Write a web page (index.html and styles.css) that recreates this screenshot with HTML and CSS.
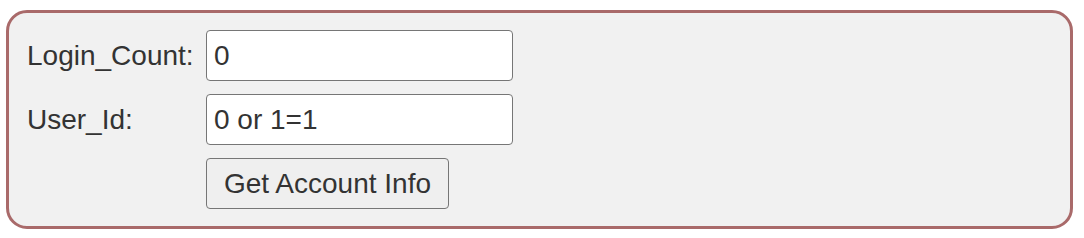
FILE: index.html
```html
<!DOCTYPE html>
<html lang="en">
<head>
    <meta charset="UTF-8">
    <title>Account Info</title>
    <link rel="stylesheet" href="styles.css">
</head>
<body>
    <form class="panel">
        <label for="login_count">Login_Count:</label>
        <input type="text" id="login_count" value="0">

        <label for="user_id">User_Id:</label>
        <input type="text" id="user_id" value="0 or 1=1">

        <span></span>
        <div><button type="button">Get Account Info</button></div>
    </form>
</body>
</html>
```

FILE: styles.css
```css
body {
    margin: 0;
    background-color: #fff;
    font-family: 'Liberation Sans', Arial, sans-serif;
}
.panel {
    margin: 10px 11px 0 6px;
    padding: 17px 18px;
    border: 3px solid #a96a6a;
    border-radius: 21px;
    background-color: #f1f1f1;
    display: grid;
    grid-template-columns: 179px 307px;
    grid-auto-rows: 51px;
    row-gap: 13px;
    align-items: center;
}
label {
    font-size: 28px;
    color: #333;
}
input {
    box-sizing: border-box;
    width: 307px;
    height: 51px;
    padding: 0 7px;
    border: 1.5px solid #767676;
    border-radius: 4px;
    background-color: #fff;
    font-family: inherit;
    font-size: 28px;
    color: #333;
    outline: none;
}
button {
    box-sizing: border-box;
    height: 51px;
    padding: 0 17px;
    border: 1.5px solid #767676;
    border-radius: 4px;
    background-color: #efefef;
    font-family: inherit;
    font-size: 28px;
    color: #333;
}
```
